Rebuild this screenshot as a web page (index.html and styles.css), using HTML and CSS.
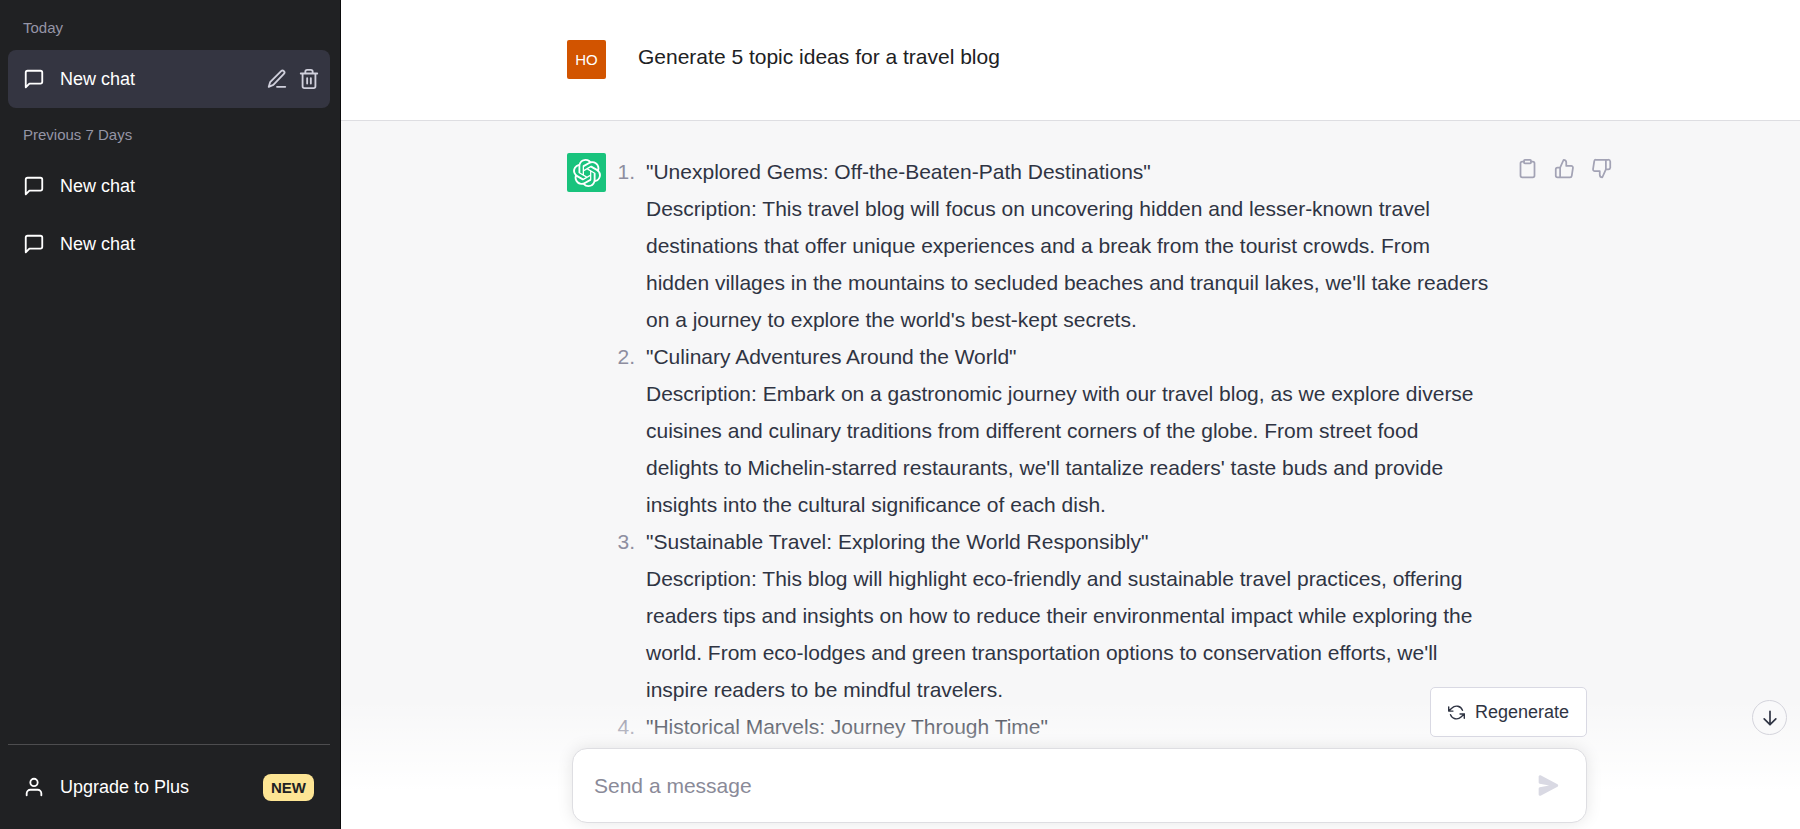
FILE: index.html
```html
<!DOCTYPE html>
<html lang="en">
<head>
  <meta charset="UTF-8" />
  <meta name="viewport" content="width=device-width, initial-scale=1.0"/>
  <title>New chat</title>
  <link rel="stylesheet" href="styles.css">
</head>
<body>
  <!-- Shared icon -->
  <svg class="sprite" aria-hidden="true">
    <symbol id="icon-chat" viewBox="0 0 24 24">
      <path d="M21 15a2 2 0 0 1-2 2H7l-4 4V5a2 2 0 0 1 2-2h14a2 2 0 0 1 2 2z"/>
    </symbol>
  </svg>

  <div class="app">
    <!-- Sidebar -->
    <aside class="sidebar">
      <nav class="history">
        <h3 class="history-label">Today</h3>
        <div class="chat-item active">
          <a class="chat-link" href="#"><svg class="icon"><use href="#icon-chat"/></svg>New chat</a>
          <button class="icon-btn" aria-label="Rename">
            <svg class="icon" viewBox="0 0 24 24"><path d="M12 20.5h9M16.5 3.5a2.1 2.1 0 0 1 3 3L8 18.5l-5 2 1.5-5z"/></svg>
          </button>
          <button class="icon-btn" aria-label="Delete">
            <svg class="icon" viewBox="0 0 24 24"><path d="M3 6h18M19 6v14a2 2 0 0 1-2 2H7a2 2 0 0 1-2-2V6m3 0V4a2 2 0 0 1 2-2h4a2 2 0 0 1 2 2v2M10 11v6M14 11v6"/></svg>
          </button>
        </div>
        <h3 class="history-label">Previous 7 Days</h3>
        <div class="chat-item">
          <a class="chat-link" href="#"><svg class="icon"><use href="#icon-chat"/></svg>New chat</a>
        </div>
        <div class="chat-item">
          <a class="chat-link" href="#"><svg class="icon"><use href="#icon-chat"/></svg>New chat</a>
        </div>
      </nav>
      <a class="upgrade" href="#">
        <svg class="icon" viewBox="0 0 24 24"><path d="M20 21v-2a4 4 0 0 0-4-4H8a4 4 0 0 0-4 4v2"/><circle cx="12" cy="7" r="4"/></svg>
        Upgrade to Plus
        <span class="badge">NEW</span>
      </a>
    </aside>

    <!-- Conversation -->
    <main class="main">
      <section class="row row-user">
        <div class="message">
          <div class="avatar avatar-user">HO</div>
          <p class="question">Generate 5 topic ideas for a travel blog</p>
        </div>
      </section>

      <section class="row row-bot">
        <div class="message">
          <div class="avatar avatar-bot">
            <svg viewBox="0 0 24 24"><path d="M22.2819 9.8211a5.9847 5.9847 0 0 0-.5157-4.9108 6.0462 6.0462 0 0 0-6.5098-2.9A6.0651 6.0651 0 0 0 4.9807 4.1818a5.9847 5.9847 0 0 0-3.9977 2.9 6.0462 6.0462 0 0 0 .7427 7.0966 5.98 5.98 0 0 0 .511 4.9107 6.051 6.051 0 0 0 6.5146 2.9001A5.9847 5.9847 0 0 0 13.2599 24a6.0557 6.0557 0 0 0 5.7718-4.2058 5.9894 5.9894 0 0 0 3.9977-2.9001 6.0557 6.0557 0 0 0-.7475-7.0729zm-9.022 12.6081a4.4755 4.4755 0 0 1-2.8764-1.0408l.1419-.0804 4.7783-2.7582a.7948.7948 0 0 0 .3927-.6813v-6.7369l2.02 1.1686a.071.071 0 0 1 .038.052v5.5826a4.504 4.504 0 0 1-4.4945 4.4944zm-9.6607-4.1254a4.4708 4.4708 0 0 1-.5346-3.0137l.142.0852 4.783 2.7582a.7712.7712 0 0 0 .7806 0l5.8428-3.3685v2.3324a.0804.0804 0 0 1-.0332.0615L9.74 19.9502a4.4992 4.4992 0 0 1-6.1408-1.6464zM2.3408 7.8956a4.485 4.485 0 0 1 2.3655-1.9728V11.6a.7664.7664 0 0 0 .3879.6765l5.8144 3.3543-2.0201 1.1685a.0757.0757 0 0 1-.071 0l-4.8303-2.7865A4.504 4.504 0 0 1 2.3408 7.872zm16.5963 3.8558L13.1038 8.364 15.1192 7.2a.0757.0757 0 0 1 .071 0l4.8303 2.7913a4.4944 4.4944 0 0 1-.6765 8.1042v-5.6772a.79.79 0 0 0-.407-.667zm2.0107-3.0231l-.142-.0852-4.7735-2.7818a.7759.7759 0 0 0-.7854 0L9.409 9.2297V6.8974a.0662.0662 0 0 1 .0284-.0615l4.8303-2.7866a4.4992 4.4992 0 0 1 6.6802 4.66zM8.3065 12.863l-2.02-1.1638a.0804.0804 0 0 1-.038-.0567V6.0742a4.4992 4.4992 0 0 1 7.3757-3.4537l-.142.0805L8.704 5.459a.7948.7948 0 0 0-.3927.6813zm1.0976-2.3654l2.602-1.4998 2.6069 1.4998v2.9994l-2.5974 1.4997-2.6067-1.4997Z"/></svg>
          </div>
          <ol class="answer">
            <li><div>"Unexplored Gems: Off-the-Beaten-Path Destinations"<br/>Description: This travel blog will focus on uncovering hidden and lesser-known travel destinations that offer unique experiences and a break from the tourist crowds. From hidden villages in the mountains to secluded beaches and tranquil lakes, we'll take readers on a journey to explore the world's best-kept secrets.</div></li>
            <li><div>"Culinary Adventures Around the World"<br/>Description: Embark on a gastronomic journey with our travel blog, as we explore diverse cuisines and culinary traditions from different corners of the globe. From street food delights to Michelin-starred restaurants, we'll tantalize readers' taste buds and provide insights into the cultural significance of each dish.</div></li>
            <li><div>"Sustainable Travel: Exploring the World Responsibly"<br/>Description: This blog will highlight eco-friendly and sustainable travel practices, offering readers tips and insights on how to reduce their environmental impact while exploring the world. From eco-lodges and green transportation options to conservation efforts, we'll inspire readers to be mindful travelers.</div></li>
            <li><div>"Historical Marvels: Journey Through Time"</div></li>
          </ol>
          <div class="actions">
            <button class="icon-btn" aria-label="Copy">
              <svg class="icon" viewBox="0 0 24 24"><path d="M16 4h2a2 2 0 0 1 2 2v14a2 2 0 0 1-2 2H6a2 2 0 0 1-2-2V6a2 2 0 0 1 2-2h2"/><rect x="8" y="2" width="8" height="4" rx="1"/></svg>
            </button>
            <button class="icon-btn" aria-label="Good response">
              <svg class="icon" viewBox="0 0 24 24"><path d="M14 9V5a3 3 0 0 0-3-3l-4 9v11h11.28a2 2 0 0 0 2-1.7l1.38-9a2 2 0 0 0-2-2.3zM7 22H4a2 2 0 0 1-2-2v-7a2 2 0 0 1 2-2h3"/></svg>
            </button>
            <button class="icon-btn" aria-label="Bad response">
              <svg class="icon" viewBox="0 0 24 24"><path d="M10 15v4a3 3 0 0 0 3 3l4-9V2H5.72a2 2 0 0 0-2 1.7l-1.38 9a2 2 0 0 0 2 2.3zm7-13h2.67A2.31 2.31 0 0 1 22 4v7a2.31 2.31 0 0 1-2.33 2H17"/></svg>
            </button>
          </div>
        </div>
      </section>

      <!-- Composer -->
      <div class="dock">
        <div class="dock-inner">
          <button class="regenerate">
            <svg class="icon" viewBox="0 0 24 24"><path d="M1 4v6h6M23 20v-6h-6M20.49 9A9 9 0 0 0 5.64 5.64L1 10m22 4l-4.64 4.36A9 9 0 0 1 3.51 15"/></svg>
            Regenerate
          </button>
          <form class="composer">
            <input class="composer-input" type="text" placeholder="Send a message" aria-label="Send a message">
            <button class="send" type="button" aria-label="Send">
              <svg viewBox="0 0 16 16"><path d="M.5 1.163A1 1 0 0 1 1.97.28l12.868 6.837a1 1 0 0 1 0 1.766L1.969 15.72A1 1 0 0 1 .5 14.836V10.33a1 1 0 0 1 .816-.983L8.5 8 1.316 6.653A1 1 0 0 1 .5 5.67V1.163Z"/></svg>
            </button>
          </form>
        </div>
      </div>

      <button class="scroll-down" aria-label="Scroll to bottom">
        <svg class="icon" viewBox="0 0 24 24"><path d="M12 4v16M19 13l-7 7-7-7"/></svg>
      </button>
    </main>
  </div>
</body>
</html>
```

FILE: styles.css
```css
* {
  box-sizing: border-box;
}

body {
  margin: 0;
  font-family: "Liberation Sans", Arial, sans-serif;
  font-size: 18px;
  color: #2f3443;
  background: #fff;
}

a {
  color: inherit;
  text-decoration: none;
}

button {
  padding: 0;
  border: none;
  background: none;
  font: inherit;
  color: inherit;
  cursor: pointer;
}

.sprite {
  display: none;
}

.icon {
  display: block;
  flex: none;
  width: 22px;
  height: 22px;
  fill: none;
  stroke: currentColor;
  stroke-width: 2;
  stroke-linecap: round;
  stroke-linejoin: round;
}

.app {
  display: flex;
  height: 100vh;
  overflow: hidden;
}

/* Sidebar */
.sidebar {
  display: flex;
  flex-direction: column;
  flex: none;
  width: 341px;
  padding: 1px 10px 0 8px;
  border-right: 1px solid #0c0c0d;
  background: #202123;
  color: #fff;
}

.history {
  flex: 1;
}

.history-label {
  height: 49px;
  margin: 0;
  padding: 4px 15px 0;
  font-size: 15px;
  font-weight: normal;
  line-height: 45px;
  color: #9595a6;
}

.chat-item {
  display: flex;
  align-items: center;
  gap: 10px;
  height: 58px;
  padding: 0 10px 0 15px;
  border-radius: 8px;
}

.chat-item.active {
  background: #343541;
}

.chat-link {
  display: flex;
  flex: 1;
  align-items: center;
  gap: 15px;
}

.chat-item .icon-btn {
  color: #d0d0dc;
}

.upgrade {
  display: flex;
  align-items: center;
  gap: 15px;
  height: 85px;
  padding: 0 16px 0 15px;
  border-top: 1px solid #4d4d4f;
}

.badge {
  margin-left: auto;
  padding: 0 8px;
  border-radius: 8px;
  background: #fde594;
  color: #202123;
  font-size: 15px;
  font-weight: bold;
  line-height: 27px;
}

/* Conversation */
.main {
  position: relative;
  flex: 1;
  min-width: 0;
  overflow: hidden;
  background: #f7f7f8;
}

.row {
  padding-left: 38px;
}

.row-user {
  padding-top: 40px;
  padding-bottom: 41px;
  border-bottom: 1px solid #dedee2;
  background: #fff;
}

.row-bot {
  padding-top: 32px;
}

.message {
  display: flex;
  max-width: 1045px;
  margin: 0 auto;
  font-size: 21px;
  line-height: 37px;
}

.avatar {
  display: flex;
  flex: none;
  align-items: center;
  justify-content: center;
  width: 39px;
  height: 39px;
  border-radius: 2px;
  color: #fff;
}

.avatar-user {
  background: #d25400;
  font-size: 15px;
}

.avatar-bot {
  background: #19c37d;
}

.avatar-bot svg {
  width: 28px;
  height: 28px;
  fill: currentColor;
}

.question {
  margin: 0 0 0 32px;
  line-height: 34px;
  color: #202123;
}

.answer {
  flex: 1;
  min-width: 0;
  margin: 0;
  padding: 0;
  list-style: none;
  counter-reset: topic;
}

.answer li {
  display: flex;
  gap: 11px;
  counter-increment: topic;
}

.answer li::before {
  content: counter(topic) ".";
  flex: none;
  width: 29px;
  text-align: right;
  color: #8e8ea0;
}

.actions {
  display: flex;
  flex: none;
  gap: 16px;
  height: 21px;
  margin: 5px 0 0 26px;
  color: #a3a3b5;
}

.actions .icon {
  width: 21px;
  height: 21px;
}

/* Composer */
.dock {
  position: absolute;
  right: 0;
  bottom: 0;
  left: 0;
  padding: 18px 0 6px 18px;
  background: linear-gradient(rgba(255, 255, 255, 0) 19%, #fff 76%);
}

.dock-inner {
  display: flex;
  flex-direction: column;
  gap: 11px;
  max-width: 1015px;
  margin: 0 auto;
}

.regenerate {
  display: flex;
  align-items: center;
  align-self: flex-end;
  gap: 10px;
  height: 50px;
  padding: 0 17px;
  border: 1px solid #d9d9e3;
  border-radius: 5px;
  background: #fff;
}

.regenerate .icon {
  width: 17px;
  height: 17px;
}

.composer {
  display: flex;
  align-items: center;
  height: 75px;
  padding: 0 27px 0 21px;
  border: 1px solid #dedee2;
  border-radius: 15px;
  background: #fff;
  box-shadow: 0 0 16px rgba(0, 0, 0, 0.1);
}

.composer-input {
  flex: 1;
  min-width: 0;
  padding: 0;
  border: none;
  outline: none;
  background: none;
  font: inherit;
  font-size: 21px;
  color: #202123;
}

.composer-input::placeholder {
  color: #8a8a98;
}

.send svg {
  display: block;
  width: 21px;
  height: 21px;
  fill: #d9d9e3;
}

.scroll-down {
  position: absolute;
  right: 13px;
  bottom: 94px;
  display: flex;
  align-items: center;
  justify-content: center;
  width: 35px;
  height: 35px;
  border: 1px solid #d4d4dc;
  border-radius: 50%;
  background: #f9f9fa;
}

.scroll-down .icon {
  width: 20px;
  height: 20px;
}
```
